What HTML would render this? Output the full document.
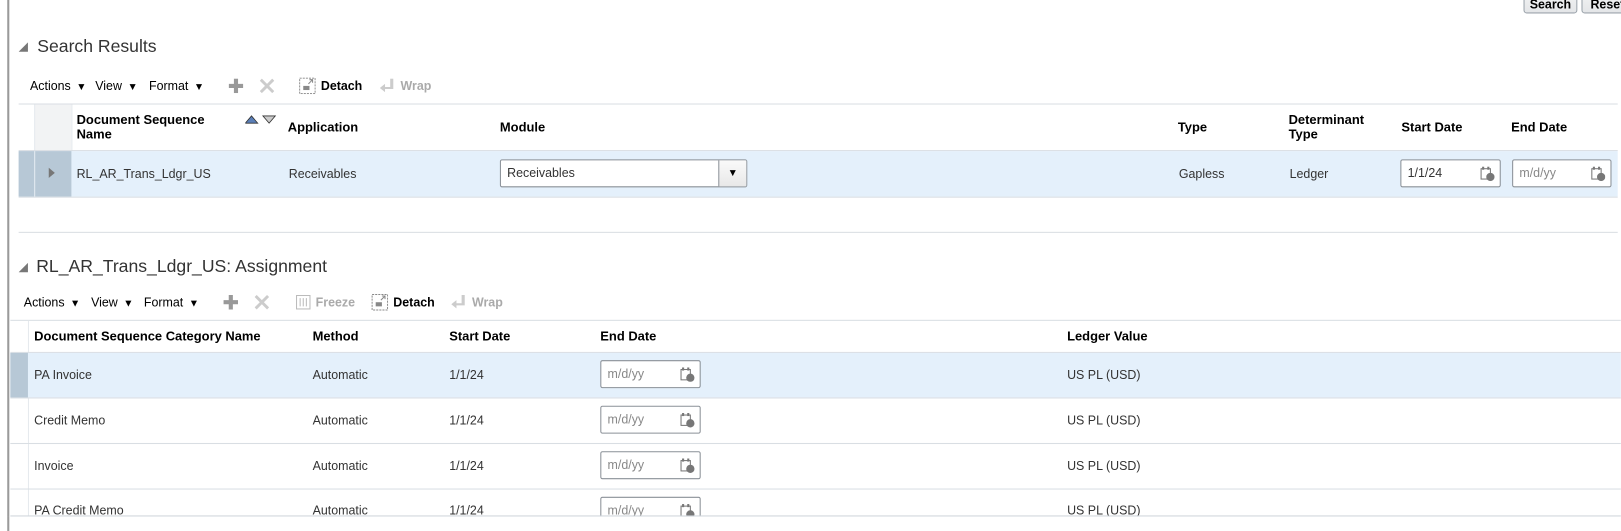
<!DOCTYPE html>
<html><head><meta charset="utf-8"><style>
html,body{margin:0;padding:0;width:1621px;height:531px;overflow:hidden;background:#fff;font-family:"Liberation Sans",Arial,sans-serif;}
#w{position:absolute;left:0;top:0;width:1566px;height:513px;transform:scale(1.035);transform-origin:0 0;}
.a{position:absolute;white-space:nowrap;}
.t{font-size:12px;color:#333;}
.h{font-size:12.5px;font-weight:bold;color:#000;line-height:14px;}
.tb{font-size:12px;color:#000;}
.tb i{font-style:normal;font-size:10px;margin-left:2px;}
.dis{color:#aaa;font-weight:bold;}
.hl{position:absolute;height:1px;background:#d9dee3;}
.vl{position:absolute;width:1px;background:#e6eaee;}
.inp{position:absolute;background:#fff;border:1px solid #8a9097;border-radius:2px;box-sizing:border-box;font-size:12px;color:#333;padding-left:6px;line-height:25px;}
.ph{color:#888;}
.cal{position:absolute;right:5px;top:6px;width:14px;height:14px;}
.btn{position:absolute;border:1px solid #9aa2aa;border-radius:3px;background:linear-gradient(#f7f7f7,#e4e6e8);font-size:12px;font-weight:bold;text-align:center;box-sizing:border-box;}
</style></head><body><div id="w">
<div style="position:absolute;left:7px;top:0;width:2px;height:513px;background:#9a9a9a"></div>
<div class="btn" style="left:1472px;top:-14px;width:52px;height:27px;line-height:34px">Search</div>
<div class="btn" style="left:1528px;top:-14px;width:50px;height:27px;line-height:34px">Reset</div>

<svg class="a" style="left:18px;top:41px" width="10" height="10"><polygon points="9,0 9,9 0,9" fill="#777"/></svg>
<div class="a" style="left:36px;top:35px;font-size:17px;color:#333">Search Results</div>

<div class="a tb" style="left:29px;top:76px">Actions <i>▼</i></div>
<div class="a tb" style="left:92px;top:76px">View <i>▼</i></div>
<div class="a tb" style="left:144px;top:76px">Format <i>▼</i></div>
<svg class="a" style="left:221px;top:76px" width="14" height="14"><path d="M5 0h4v5h5v4H9v5H5V9H0V5h5z" fill="#999"/></svg>
<svg class="a" style="left:251px;top:76px" width="14" height="14"><path d="M2 0L7 5 12 0 14 2 9 7 14 12 12 14 7 9 2 14 0 12 5 7 0 2z" fill="#ccc"/></svg>
<svg class="a" style="left:289px;top:75px" width="16" height="16"><rect x=".5" y=".5" width="15" height="15" fill="none" stroke="#888" stroke-dasharray="2,1"/><rect x="4" y="8" width="6" height="4" fill="#888"/><path d="M9 6l4-4M10 2h3v3" stroke="#888" fill="none"/></svg>
<div class="a tb" style="left:310px;top:76px;font-weight:bold">Detach</div>
<svg class="a" style="left:367px;top:76px" width="14" height="14"><path d="M10 0h3v10H5v3L0 9l5-4v3h5z" fill="#ccc"/></svg>
<div class="a tb dis" style="left:387px;top:76px">Wrap</div>

<div class="hl" style="left:18px;top:100px;width:1545px"></div>
<div class="a" style="left:33px;top:101px;width:36px;height:44px;background:#f2f3f4"></div>
<div class="vl" style="left:33px;top:101px;height:89px"></div>
<div class="vl" style="left:69px;top:101px;height:89px"></div>
<div class="a h" style="left:74px;top:109px">Document Sequence<br>Name</div>
<svg class="a" style="left:237px;top:111px" width="30" height="10"><polygon points="0,8 6,1 12,8" fill="#5b7fb8" stroke="#333" stroke-width=".8"/><polygon points="17,1 29,1 23,8" fill="#ccc" stroke="#333" stroke-width=".8"/></svg>
<div class="a h" style="left:278px;top:116px">Application</div>
<div class="a h" style="left:483px;top:116px">Module</div>
<div class="a h" style="left:1138px;top:116px">Type</div>
<div class="a h" style="left:1245px;top:109px">Determinant<br>Type</div>
<div class="a h" style="left:1354px;top:116px">Start Date</div>
<div class="a h" style="left:1460px;top:116px">End Date</div>
<div class="hl" style="left:18px;top:145px;width:1545px"></div>
<div class="a" style="left:18px;top:146px;width:1545px;height:44px;background:#e4f0fb"></div>
<div class="a" style="left:18px;top:146px;width:51px;height:44px;background:#b7c8d6"></div>
<div class="a" style="left:33px;top:146px;width:1px;height:44px;background:#e4ecf2"></div>
<svg class="a" style="left:47px;top:162px" width="6" height="10"><polygon points="0,0 6,5 0,10" fill="#777"/></svg>
<div class="a t" style="left:74px;top:161px">RL_AR_Trans_Ldgr_US</div>
<div class="a t" style="left:279px;top:161px">Receivables</div>
<div class="inp" style="left:483px;top:154px;width:239px;height:27px">Receivables<div style="position:absolute;right:0;top:0;width:26px;height:25px;border-left:1px solid #8a9097;background:linear-gradient(#fafafa,#e8e8e8);font-size:10px;text-align:center;color:#000">▼</div></div>
<div class="a t" style="left:1139px;top:161px">Gapless</div>
<div class="a t" style="left:1246px;top:161px">Ledger</div>
<div class="inp" style="left:1353px;top:154px;width:97px;height:27px">1/1/24<svg class="cal" viewBox="0 0 14 14"><rect x="1" y="2" width="9" height="10" fill="none" stroke="#777"/><rect x="2" y="0" width="2" height="3" fill="#777"/><rect x="7" y="0" width="2" height="3" fill="#777"/><circle cx="10" cy="10" r="4" fill="#777"/></svg></div>
<div class="inp ph" style="left:1461px;top:154px;width:96px;height:27px">m/d/yy<svg class="cal" viewBox="0 0 14 14"><rect x="1" y="2" width="9" height="10" fill="none" stroke="#777"/><rect x="2" y="0" width="2" height="3" fill="#777"/><rect x="7" y="0" width="2" height="3" fill="#777"/><circle cx="10" cy="10" r="4" fill="#777"/></svg></div>
<div class="hl" style="left:18px;top:190px;width:1545px"></div>
<div class="hl" style="left:18px;top:224px;width:1545px"></div>

<svg class="a" style="left:18px;top:254px" width="10" height="10"><polygon points="9,0 9,9 0,9" fill="#777"/></svg>
<div class="a" style="left:35px;top:248px;font-size:17px;color:#333">RL_AR_Trans_Ldgr_US: Assignment</div>

<div class="a tb" style="left:23px;top:285px">Actions <i>▼</i></div>
<div class="a tb" style="left:88px;top:285px">View <i>▼</i></div>
<div class="a tb" style="left:139px;top:285px">Format <i>▼</i></div>
<svg class="a" style="left:216px;top:285px" width="14" height="14"><path d="M5 0h4v5h5v4H9v5H5V9H0V5h5z" fill="#999"/></svg>
<svg class="a" style="left:246px;top:285px" width="14" height="14"><path d="M2 0L7 5 12 0 14 2 9 7 14 12 12 14 7 9 2 14 0 12 5 7 0 2z" fill="#ccc"/></svg>
<svg class="a" style="left:286px;top:285px" width="14" height="14"><rect x=".5" y=".5" width="13" height="13" fill="none" stroke="#bbb"/><path d="M4 3v8M7 3v8M10 3v8" stroke="#bbb"/></svg>
<div class="a tb dis" style="left:305px;top:285px">Freeze</div>
<svg class="a" style="left:359px;top:284px" width="16" height="16"><rect x=".5" y=".5" width="15" height="15" fill="none" stroke="#888" stroke-dasharray="2,1"/><rect x="4" y="8" width="6" height="4" fill="#888"/><path d="M9 6l4-4M10 2h3v3" stroke="#888" fill="none"/></svg>
<div class="a tb" style="left:380px;top:285px;font-weight:bold">Detach</div>
<svg class="a" style="left:436px;top:285px" width="14" height="14"><path d="M10 0h3v10H5v3L0 9l5-4v3h5z" fill="#ccc"/></svg>
<div class="a tb dis" style="left:456px;top:285px">Wrap</div>

<div class="hl" style="left:10px;top:309px;width:1556px"></div>
<div class="vl" style="left:27px;top:310px;height:188px"></div>
<div class="a h" style="left:33px;top:318px">Document Sequence Category Name</div>
<div class="a h" style="left:302px;top:318px">Method</div>
<div class="a h" style="left:434px;top:318px">Start Date</div>
<div class="a h" style="left:580px;top:318px">End Date</div>
<div class="a h" style="left:1031px;top:318px">Ledger Value</div>
<div class="hl" style="left:10px;top:340px;width:1556px"></div>
<div class="a" style="left:10px;top:341px;width:1556px;height:43px;background:#e4f0fb"></div>
<div class="a" style="left:10px;top:341px;width:17px;height:43px;background:#b7c8d6"></div>
<div class="hl" style="left:10px;top:384px;width:1556px"></div>
<div class="hl" style="left:10px;top:428px;width:1556px"></div>
<div class="hl" style="left:10px;top:472px;width:1556px"></div>
<div class="a" style="left:0;top:499px;width:1566px;height:14px;background:#fff;z-index:5"></div>
<div class="hl" style="left:10px;top:498px;width:1556px;background:#cfd5db;z-index:6"></div>

<div class="a t" style="left:33px;top:355px">PA Invoice</div>
<div class="a t" style="left:302px;top:355px">Automatic</div>
<div class="a t" style="left:434px;top:355px">1/1/24</div>
<div class="inp ph" style="left:580px;top:348px;width:97px;height:27px">m/d/yy<svg class="cal" viewBox="0 0 14 14"><rect x="1" y="2" width="9" height="10" fill="none" stroke="#777"/><rect x="2" y="0" width="2" height="3" fill="#777"/><rect x="7" y="0" width="2" height="3" fill="#777"/><circle cx="10" cy="10" r="4" fill="#777"/></svg></div>
<div class="a t" style="left:1031px;top:355px">US PL (USD)</div>

<div class="a t" style="left:33px;top:399px">Credit Memo</div>
<div class="a t" style="left:302px;top:399px">Automatic</div>
<div class="a t" style="left:434px;top:399px">1/1/24</div>
<div class="inp ph" style="left:580px;top:392px;width:97px;height:27px">m/d/yy<svg class="cal" viewBox="0 0 14 14"><rect x="1" y="2" width="9" height="10" fill="none" stroke="#777"/><rect x="2" y="0" width="2" height="3" fill="#777"/><rect x="7" y="0" width="2" height="3" fill="#777"/><circle cx="10" cy="10" r="4" fill="#777"/></svg></div>
<div class="a t" style="left:1031px;top:399px">US PL (USD)</div>

<div class="a t" style="left:33px;top:443px">Invoice</div>
<div class="a t" style="left:302px;top:443px">Automatic</div>
<div class="a t" style="left:434px;top:443px">1/1/24</div>
<div class="inp ph" style="left:580px;top:436px;width:97px;height:27px">m/d/yy<svg class="cal" viewBox="0 0 14 14"><rect x="1" y="2" width="9" height="10" fill="none" stroke="#777"/><rect x="2" y="0" width="2" height="3" fill="#777"/><rect x="7" y="0" width="2" height="3" fill="#777"/><circle cx="10" cy="10" r="4" fill="#777"/></svg></div>
<div class="a t" style="left:1031px;top:443px">US PL (USD)</div>

<div class="a t" style="left:33px;top:486px">PA Credit Memo</div>
<div class="a t" style="left:302px;top:486px">Automatic</div>
<div class="a t" style="left:434px;top:486px">1/1/24</div>
<div class="inp ph" style="left:580px;top:480px;width:97px;height:27px">m/d/yy<svg class="cal" viewBox="0 0 14 14"><rect x="1" y="2" width="9" height="10" fill="none" stroke="#777"/><rect x="2" y="0" width="2" height="3" fill="#777"/><rect x="7" y="0" width="2" height="3" fill="#777"/><circle cx="10" cy="10" r="4" fill="#777"/></svg></div>
<div class="a t" style="left:1031px;top:486px">US PL (USD)</div>
<div style="position:absolute;left:7px;top:499px;width:2px;height:14px;background:#9a9a9a;z-index:7"></div>
</div></body></html>
